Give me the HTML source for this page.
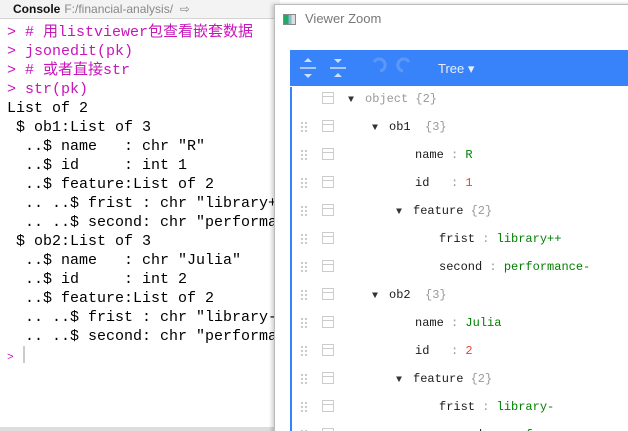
<!DOCTYPE html>
<html><head><meta charset="utf-8"><style>
*{margin:0;padding:0;box-sizing:border-box}
html,body{width:628px;height:431px;overflow:hidden}
body{background:#fff;position:relative;font-family:"Liberation Sans",sans-serif}
#hdr{position:absolute;left:0;top:0;width:280px;height:19px;background:#f3f3f3;border-bottom:1px solid #d4d4d4;font-size:12px;line-height:19px;padding-left:13px}
#hdr b{color:#111;font-weight:bold}
#hdr span{color:#888;margin-left:4px}
#con{position:absolute;left:7px;top:23px;font-family:"Liberation Mono","Noto Sans CJK SC",monospace;font-size:15px;line-height:19px;white-space:pre;color:#000}
.m{color:#c716b9}
#bot{position:absolute;left:0;top:427px;width:280px;height:4px;background:#ddd}
#win{position:absolute;left:274px;top:4px;width:360px;height:440px;background:#fff;border:1px solid #bbb;box-shadow:-2px 0 4px rgba(0,0,0,.2)}
#title{position:absolute;left:30px;top:6px;font-size:13px;color:#777}
#ico{position:absolute;left:8px;top:9px;width:13px;height:11px;border:1px solid #888;background:linear-gradient(90deg,#2a6 0 40%,#8bc 40% 70%,#ddd 70%)}
#bar{position:absolute;left:290px;top:50px;width:338px;height:36px;background:#3883fa}
#tree{position:absolute;left:290px;top:87px;width:338px;height:345px;border-left:2px solid #3883fa;font-family:"Liberation Mono",monospace;font-size:12px}
.r{position:absolute;height:28px;line-height:24px;left:0;width:336px}
.d{position:absolute;left:8px;top:6px;width:8px;height:11px;background-image:radial-gradient(#ccc 1.2px,transparent 1.3px);background-size:4px 4px}
.c{position:absolute;left:30px;top:5px;width:12px;height:12px;border:1.5px solid #ccc}
.c:after{content:"";position:absolute;left:0;right:0;top:3px;border-top:1.5px solid #ccc}
.t{position:absolute;top:0;white-space:pre;color:#1a1a1a}
.a{font-size:10px;color:#333;display:inline-block;width:17px}
.g{color:#999}.gr{color:#008000}.rd{color:#ee422e}
</style></head><body>
<div id="hdr"><b>Console</b><span>F:/financial-analysis/ &nbsp;⇨</span></div>
<div id="con"><span class="m">&gt; # 用listviewer包查看嵌套数据
&gt; jsonedit(pk)
&gt; # 或者直接str
&gt; str(pk)</span>
List of 2
 $ ob1:List of 3
  ..$ name   : chr "R"
  ..$ id     : int 1
  ..$ feature:List of 2
  .. ..$ frist : chr "library++"
  .. ..$ second: chr "performance-"
 $ ob2:List of 3
  ..$ name   : chr "Julia"
  ..$ id     : int 2
  ..$ feature:List of 2
  .. ..$ frist : chr "library-"
  .. ..$ second: chr "performance-"
<span class="m" style="font-size:11px">&gt;</span> <span style="display:inline-block;width:2px;height:17px;background:#ccc;vertical-align:-3px"></span></div>
<div id="bot"></div>
<div id="win"><div id="ico"></div><div id="title">Viewer Zoom</div></div>
<div id="bar">
<svg width="338" height="36" style="position:absolute;left:0;top:0">
<g fill="#cfe0fd" stroke="#cfe0fd" stroke-width="1.5">
<line x1="10" y1="18" x2="26" y2="18"/><path d="M14 12 L18 8 L22 12Z M14 24 L18 28 L22 24Z" stroke="none"/>
<line x1="40" y1="18" x2="56" y2="18"/><path d="M44 9 L48 13 L52 9Z M44 27 L48 23 L52 27Z" stroke="none"/>
</g>
<g fill="none" stroke="#5c97f9" stroke-width="3"><path d="M90 21 A6 6 0 1 0 84 12"/><path d="M113 21 A6 6 0 1 1 119 12"/></g>
<text x="148" y="23" font-family="Liberation Sans" font-size="13" fill="#e6eefe">Tree ▾</text>
</svg></div>
<div id="tree">
<div class="r" style="top:0"><div class="c"></div><div class="t" style="left:56px"><span class="a">▼</span><span class="g">object {2}</span></div></div>
<div class="r" style="top:28px"><div class="d"></div><div class="c"></div><div class="t" style="left:80px"><span class="a">▼</span>ob1  <span class="g">{3}</span></div></div>
<div class="r" style="top:56px"><div class="d"></div><div class="c"></div><div class="t" style="left:123px">name <span class="g">:</span> <span class="gr">R</span></div></div>
<div class="r" style="top:84px"><div class="d"></div><div class="c"></div><div class="t" style="left:123px">id   <span class="g">:</span> <span class="rd">1</span></div></div>
<div class="r" style="top:112px"><div class="d"></div><div class="c"></div><div class="t" style="left:104px"><span class="a">▼</span>feature <span class="g">{2}</span></div></div>
<div class="r" style="top:140px"><div class="d"></div><div class="c"></div><div class="t" style="left:147px">frist <span class="g">:</span> <span class="gr">library++</span></div></div>
<div class="r" style="top:168px"><div class="d"></div><div class="c"></div><div class="t" style="left:147px">second <span class="g">:</span> <span class="gr">performance-</span></div></div>
<div class="r" style="top:196px"><div class="d"></div><div class="c"></div><div class="t" style="left:80px"><span class="a">▼</span>ob2  <span class="g">{3}</span></div></div>
<div class="r" style="top:224px"><div class="d"></div><div class="c"></div><div class="t" style="left:123px">name <span class="g">:</span> <span class="gr">Julia</span></div></div>
<div class="r" style="top:252px"><div class="d"></div><div class="c"></div><div class="t" style="left:123px">id   <span class="g">:</span> <span class="rd">2</span></div></div>
<div class="r" style="top:280px"><div class="d"></div><div class="c"></div><div class="t" style="left:104px"><span class="a">▼</span>feature <span class="g">{2}</span></div></div>
<div class="r" style="top:308px"><div class="d"></div><div class="c"></div><div class="t" style="left:147px">frist <span class="g">:</span> <span class="gr">library-</span></div></div>
<div class="r" style="top:336px"><div class="d"></div><div class="c"></div><div class="t" style="left:147px">second <span class="g">:</span> <span class="gr">performance-</span></div></div>
</div>
</body></html>
